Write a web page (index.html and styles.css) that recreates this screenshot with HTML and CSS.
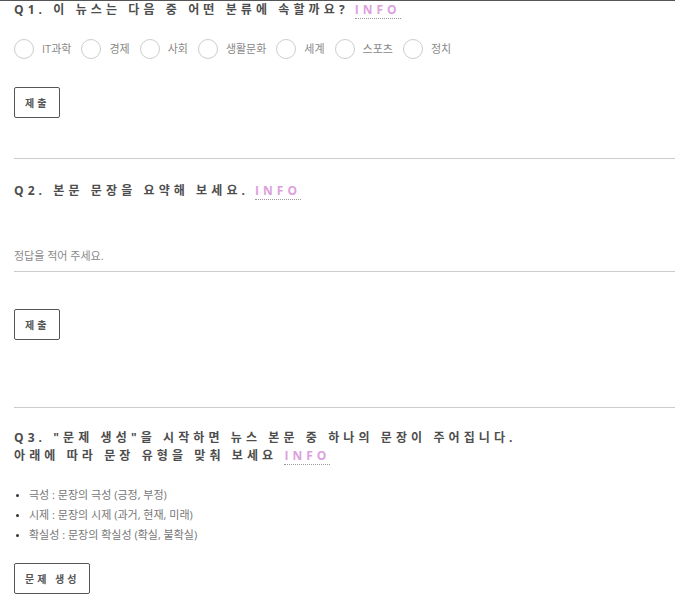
FILE: index.html
```html
<!DOCTYPE html>
<html lang="ko">
<head>
<meta charset="utf-8">
<link rel="stylesheet" href="styles.css">
</head>
<body>
<div class="page">
  <section class="quiz q1">
    <h2 class="q-title">Q1. 이 뉴스는 다음 중 어떤 분류에 속할까요?<abbr class="info">INFO</abbr></h2>
    <div class="radios">
      <label class="radio"><span class="circle"></span><span class="lbl">IT과학</span></label>
      <label class="radio"><span class="circle"></span><span class="lbl">경제</span></label>
      <label class="radio"><span class="circle"></span><span class="lbl">사회</span></label>
      <label class="radio"><span class="circle"></span><span class="lbl">생활문화</span></label>
      <label class="radio"><span class="circle"></span><span class="lbl">세계</span></label>
      <label class="radio"><span class="circle"></span><span class="lbl">스포츠</span></label>
      <label class="radio"><span class="circle"></span><span class="lbl">정치</span></label>
    </div>
    <button class="btn">제출</button>
  </section>
  <hr class="divider">
  <section class="quiz q2">
    <h2 class="q-title">Q2. 본문 문장을 요약해 보세요.<abbr class="info">INFO</abbr></h2>
    <div class="answer"><span class="placeholder">정답을 적어 주세요.</span></div>
    <button class="btn">제출</button>
  </section>
  <hr class="divider">
  <section class="quiz q3">
    <h2 class="q-title">Q3. "문제 생성"을 시작하면 뉴스 본문 중 하나의 문장이 주어집니다.<br>아래에 따라 문장 유형을 맞춰 보세요 <abbr class="info">INFO</abbr></h2>
    <ul class="types">
      <li>극성 : 문장의 극성 (긍정, 부정)</li>
      <li>시제 : 문장의 시제 (과거, 현재, 미래)</li>
      <li>확실성 : 문장의 확실성 (확실, 불확실)</li>
    </ul>
    <button class="btn">문제 생성</button>
  </section>
</div>
</body>
</html>
```
FILE: styles.css
```css
html, body {
  margin: 0;
  padding: 0;
  background: #fff;
}
.page {
  border-top: 1px solid #555;
  padding-left: 14px;
  font-family: "Open Sans", "Noto Sans CJK KR", sans-serif;
  color: #555;
}
.quiz {
  display: flex;
  flex-direction: column;
  align-items: flex-start;
}
.q-title {
  margin: 0;
  font-size: 12px;
  font-weight: 700;
  line-height: 18px;
  letter-spacing: 4.1px;
  color: #4d4d4d;
}
.info {
  color: plum;
  text-decoration: none;
  border-bottom: 1px dotted #999;
  margin-left: 6px;
  letter-spacing: 4px;
}
.q3 .info { margin-left: 0; }
.radios {
  display: flex;
  align-items: center;
  gap: 10px;
  margin-top: 20px;
}
.radio {
  display: flex;
  align-items: center;
  gap: 8px;
}
.circle {
  width: 18px;
  height: 18px;
  border: 1px solid #ccc;
  border-radius: 50%;
}
.lbl {
  font-size: 11px;
  color: #888;
  line-height: 20px;
}
.btn {
  font-family: inherit;
  background: #fff;
  border: 1px solid #555;
  border-radius: 2px;
  height: 31px;
  padding: 0 10px;
  font-size: 10px;
  font-weight: 700;
  letter-spacing: 3px;
  color: #555;
}
.q1 .btn { margin-top: 28px; }
.divider {
  border: 0;
  border-top: 1px solid #ccc;
  margin: 0;
}
.q1 { padding: 0 0 40px; }
.q2 { padding-top: 23px; padding-bottom: 67px; }
.answer {
  align-self: stretch;
  margin-top: 38px;
  height: 33px;
  border-bottom: 1px solid #ccc;
  display: flex;
  align-items: center;
}
.placeholder {
  font-size: 11px;
  color: #888;
}
.q2 .btn { margin-top: 37px; }
.q3 { padding-top: 21px; }
.types {
  list-style: none;
  margin: 20px 0 0;
  padding: 0;
}
.types li {
  display: flex;
  align-items: center;
  font-size: 11px;
  color: #777;
  line-height: 20px;
}
.types li::before {
  content: "";
  width: 3px;
  height: 3px;
  background: #333;
  border-radius: 50%;
  margin: 0 10px 0 2px;
}
.q3 .btn { margin-top: 18px; }
```
